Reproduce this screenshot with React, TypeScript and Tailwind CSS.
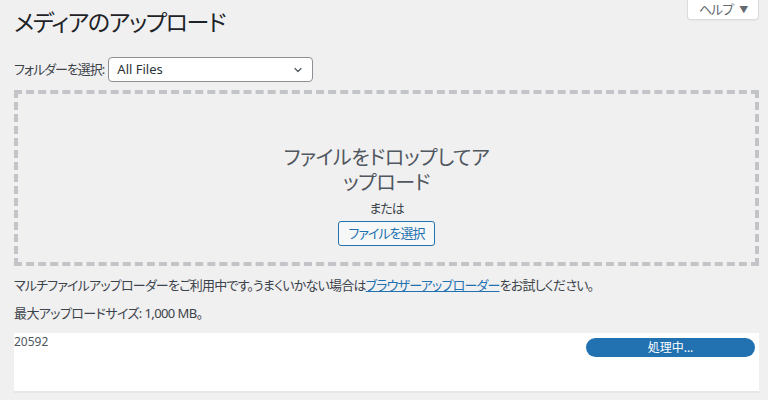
import React from "react";

// WordPress "メディアのアップロード" screen (media-new.php) with one upload in progress

const FONT = "font-['Noto_Sans','Noto_Sans_CJK_JP',sans-serif] [font-feature-settings:'palt']";

function HelpTab() {
  return (
    <button
      type="button"
      className="absolute right-[9px] top-0 flex h-[20px] w-[72px] items-center justify-center gap-[6px] rounded-b-[4px] border border-t-0 border-[#dcdcde] bg-white text-[13px] leading-none tracking-[-1px] text-[#646970] shadow-[0_1px_1px_rgba(0,0,0,0.04)]"
    >
      <span>ヘルプ</span>
      <span className="text-[9px]">▼</span>
    </button>
  );
}

function FolderSelect() {
  return (
    <div className="flex items-center gap-[4px]">
      <span className="text-[13px] tracking-[-1px] text-[#3c434a]">フォルダーを選択:</span>
      <div className="flex h-[25px] w-[205px] items-center justify-between rounded-[4px] border border-[#8c8f94] bg-white pl-[8px] pr-[8px] text-[13px] text-[#2c3338]">
        <span>All Files</span>
        <svg width="12" height="12" viewBox="0 0 20 20" aria-hidden="true">
          <path d="M5 7.5l5 5 5-5" fill="none" stroke="#50575e" strokeWidth="2" strokeLinecap="round" strokeLinejoin="round" />
        </svg>
      </div>
    </div>
  );
}

function DropZone() {
  return (
    <div className="mt-[8px] flex h-[176px] flex-col items-center border-4 border-dashed border-[#c3c4c7] pt-[51px]">
      <p className="w-[214px] text-center text-[20px] leading-[25px] tracking-[-0.4px] text-[#50575e]">
        ファイルをドロップしてアップロード
      </p>
      <p className="mt-[3px] text-[13px] leading-[20px] tracking-[-1px] text-[#3c434a]">または</p>
      <button
        type="button"
        className="mt-[3px] h-[25px] rounded-[3px] border border-[#2271b1] bg-[#f6f7f7] px-[9px] text-[13px] leading-none tracking-[-1px] text-[#2271b1]"
      >
        ファイルを選択
      </button>
    </div>
  );
}

export default function App() {
  return (
    <div className={`relative min-h-screen bg-[#f0f0f1] text-[#3c434a] ${FONT}`}>
      <HelpTab />
      <div className="pl-[14px] pr-[9px] pt-[8px]">
        <h1 className="text-[23px] font-normal leading-[29px] tracking-[-1.3px] text-[#1d2327]">メディアのアップロード</h1>

        <div className="mt-[20px]">
          <FolderSelect />
        </div>

        <DropZone />

        <p className="mt-[9px] text-[13px] leading-[20px] tracking-[-0.8px]">
          マルチファイルアップローダーをご利用中です。うまくいかない場合は
          <a href="#" className="text-[#2271b1] underline">
            ブラウザーアップローダー
          </a>
          をお試しください。
        </p>
        <p className="mt-[8px] text-[13px] leading-[20px] tracking-[-0.6px]">最大アップロードサイズ: 1,000 MB。</p>

        {/* upload queue item */}
        <div className="mt-[10px] flex h-[60px] items-start justify-between border-b-2 border-[#e6e6e6] bg-white">
          <span className="pt-[1px] text-[12px] leading-[16px] text-[#50575e]">20592</span>
          <div className="mr-[4px] mt-[5px] flex h-[19px] w-[169px] items-center justify-center rounded-full bg-[#2271b1] text-[12px] leading-none text-white">
            処理中...
          </div>
        </div>
      </div>
    </div>
  );
}
